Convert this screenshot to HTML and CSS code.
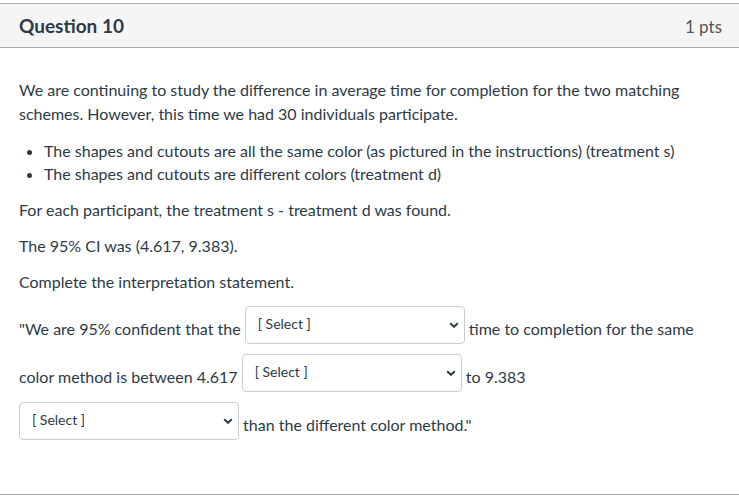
FILE: index.html
```html
<!DOCTYPE html>
<html lang="en">
<head>
<meta charset="utf-8">
<title>Question 10</title>
<link rel="stylesheet" href="styles.css">
</head>
<body>
<div class="question">
  <div class="header">
    <span class="title">Question 10</span>
    <span class="points">1 pts</span>
  </div>
  <div class="body">
    <p>We are continuing to study the difference in average time for completion for the two matching schemes. However, this time we had 30 individuals participate.</p>
    <ul>
      <li>The shapes and cutouts are all the same color (as pictured in the instructions) (treatment s)</li>
      <li>The shapes and cutouts are different colors (treatment d)</li>
    </ul>
    <p>For each participant, the treatment s - treatment d was found.</p>
    <p>The 95% CI was (4.617, 9.383).</p>
    <p>Complete the interpretation statement.</p>
    <p class="answer">"We are 95% confident that the <span class="sel"><select><option>[ Select ]</option></select><svg class="chev" viewBox="0 0 10 6" width="10" height="6"><path d="M1.2 1.2 L5 4.8 L8.8 1.2" fill="none" stroke="#2d3b45" stroke-width="2"/></svg></span> time to completion for the same color method is between 4.617 <span class="sel"><select><option>[ Select ]</option></select><svg class="chev" viewBox="0 0 10 6" width="10" height="6"><path d="M1.2 1.2 L5 4.8 L8.8 1.2" fill="none" stroke="#2d3b45" stroke-width="2"/></svg></span> to 9.383 <span class="sel"><select><option>[ Select ]</option></select><svg class="chev" viewBox="0 0 10 6" width="10" height="6"><path d="M1.2 1.2 L5 4.8 L8.8 1.2" fill="none" stroke="#2d3b45" stroke-width="2"/></svg></span> than the different color method."</p>
  </div>
</div>
</body>
</html>
```
FILE: styles.css
```css
html, body {
  margin: 0;
  padding: 0;
  background: #fff;
}
body {
  font-family: Lato, "Open Sans", sans-serif;
  color: #2d3b45;
  font-size: 16px;
}
.question {
  margin-top: 3px;
  border-top: 1px solid #a9a9a9;
  border-bottom: 1px solid #a9a9a9;
}
.header {
  display: flex;
  justify-content: space-between;
  align-items: center;
  height: 43px;
  padding: 0 17px 0 19px;
  background: #f5f5f5;
  border-bottom: 1px solid #a9a9a9;
}
.title {
  font-size: 19px;
  font-weight: 700;
  color: #2d3b45;
}
.points {
  font-size: 17px;
  color: #555;
  padding-top: 2px;
}
.body {
  padding: 30px 19px 45px;
  font-size: 16px;
  line-height: 24px;
}
p {
  margin: 0 0 12px;
}
ul {
  margin: 13px 0 13px;
  padding-left: 25px;
}
li {
  line-height: 23px;
}
.answer {
  margin: -1px 0 0;
  line-height: 48px;
}
.sel {
  position: relative;
  display: inline-block;
  width: 220px;
  height: 38px;
  vertical-align: 6px;
  line-height: normal;
}
.sel select {
  appearance: none;
  -webkit-appearance: none;
  width: 100%;
  height: 100%;
  box-sizing: border-box;
  margin: 0;
  padding: 0 28px 2px 12px;
  border: 1px solid #c7cdd1;
  border-radius: 4px;
  background: #fff;
  font-family: Lato, "Open Sans", sans-serif;
  font-size: 14px;
  color: #2d3b45;
}
.chev {
  position: absolute;
  right: 6px;
  top: 16px;
  pointer-events: none;
}
```
